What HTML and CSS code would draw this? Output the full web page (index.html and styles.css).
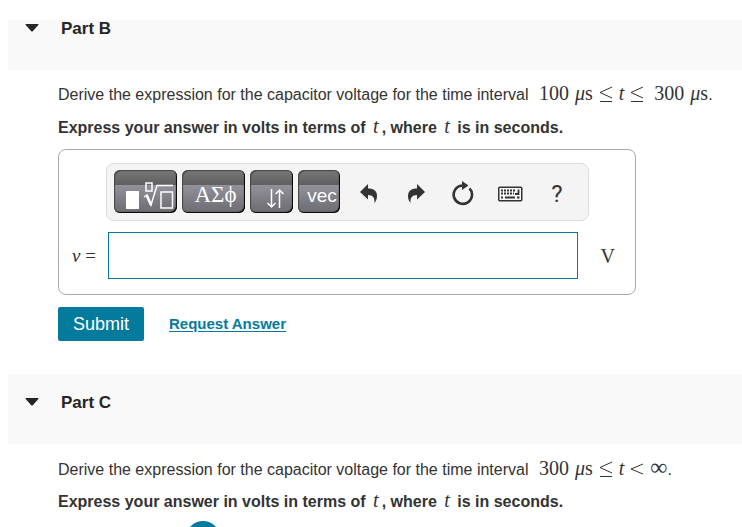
FILE: index.html
```html
<!DOCTYPE html>
<html lang="en">
<head>
  <meta charset="UTF-8">
  <meta name="viewport" content="width=device-width, initial-scale=1.0">
  <title>Capacitor Voltage</title>
  <link rel="stylesheet" href="styles.css">
</head>
<body>
  <!-- Part B -->
  <section class="part">
    <div class="part-header part-header-first">
      <button type="button" class="toggle" aria-label="Collapse Part B">
        <svg width="14" height="8" viewBox="0 0 14 8"><path d="M1 0H13Q14 0 13.300 1L8 7Q7 8 6 7L.7 1Q0 0 1 0Z" fill="#252525"/></svg>
      </button>
      <h2>Part B</h2>
    </div>
    <div class="part-body">
      <p class="question">Derive the expression for the capacitor voltage for the time interval <span class="math"><span>100</span><span><i>μ</i>s</span><svg class="rel" width="14" height="20" viewBox="0 0 14 20"><path d="M13 4L1 9.500L13 15M1 18.500H13"/></svg><i>t</i><svg class="rel" width="14" height="20" viewBox="0 0 14 20"><path d="M13 4L1 9.500L13 15M1 18.500H13"/></svg><span class="after">300</span><span><i>μ</i>s</span></span>.</p>
      <p class="instruction">Express your answer in volts in terms of <i class="var">t</i>, where <i class="var">t</i> is in seconds.</p>

      <form id="answerForm">
        <div class="answer-box">
          <div class="toolbar">
            <button type="button" class="tool" aria-label="Templates">
              <svg width="63" height="43" viewBox="0 0 63 43"><path d="M12 21H25V39H12Z" fill="#fff"/><path d="M32 13H38V21H32ZM47 22H58.500V38H47Z" fill="none" stroke="#fff" stroke-width="1.500"/><path d="M30 27L33 25L37 35L43 15.500H59" fill="none" stroke="#fff" stroke-width="1.500"/><path d="M33 26L37 35" stroke="#fff" stroke-width="2.500"/></svg>
            </button>
            <button type="button" class="tool greek">ΑΣϕ</button>
            <button type="button" class="tool arrows" aria-label="Arrows">
              <svg width="43" height="43" viewBox="0 0 43 43"><path d="M21.500 19V37M17.500 33L21.500 37L25.500 33M29.500 38V20M25.500 24L29.500 20L33.500 24" fill="none" stroke="#fff" stroke-width="1.500"/></svg>
            </button>
            <button type="button" class="tool vec">vec</button>
            <button type="button" class="icon" aria-label="Undo">
              <svg width="20" height="22" viewBox="0 0 20 22"><path d="M1 9L9 1V5.500C15 5.500 18 8 18 13C18 16 17 18 15.500 20C16 15 14 12 9 12V16.500Z" fill="#333"/></svg>
            </button>
            <button type="button" class="icon" aria-label="Redo">
              <svg width="20" height="22" viewBox="0 0 20 22"><path d="M19 9L11 1V5.500C5 5.500 2 8 2 13C2 16 3 18 4.500 20C4 15 6 12 11 12V16.500Z" fill="#333"/></svg>
            </button>
            <button type="button" class="icon" aria-label="Reset">
              <svg width="22" height="28" viewBox="0 0 22 28"><path d="M17.500 8.300A9.200 9.200 0 1 1 10 5.500" fill="none" stroke="#333" stroke-width="2.600"/><path d="M10 1L16.500 5.500L10 10Z" fill="#333"/></svg>
            </button>
            <button type="button" class="icon" aria-label="Keyboard">
              <svg width="26" height="18" viewBox="0 0 26 18"><rect x="1.750" y="2.250" width="23" height="13.500" rx="1" fill="#f8f8f8" stroke="#333" stroke-width="1.500"/><path d="M4 5.500H19M4 8.500H17" stroke="#333" stroke-width="2" stroke-dasharray="2 1"/><path d="M21.500 4.500V9H18M4 12.500H6M8 12.500H18M20 12.500H22.500" fill="none" stroke="#333" stroke-width="1.800"/></svg>
            </button>
            <button type="button" class="icon help" aria-label="Help">?</button>
          </div>
          <div class="answer-row">
            <label for="answer"><i>v</i> =</label>
            <input type="text" id="answer">
            <span class="volts">V</span>
          </div>
        </div>
        <div class="actions">
          <button type="submit" class="submit">Submit</button>
          <a href="#request">Request Answer</a>
        </div>
      </form>
    </div>
  </section>

  <!-- Part C -->
  <section class="part">
    <div class="part-header">
      <button type="button" class="toggle" aria-label="Collapse Part C">
        <svg width="14" height="8" viewBox="0 0 14 8"><path d="M1 0H13Q14 0 13.300 1L8 7Q7 8 6 7L.7 1Q0 0 1 0Z" fill="#252525"/></svg>
      </button>
      <h2>Part C</h2>
    </div>
    <div class="part-body">
      <p class="question">Derive the expression for the capacitor voltage for the time interval <span class="math"><span>300</span><span><i>μ</i>s</span><svg class="rel" width="14" height="20" viewBox="0 0 14 20"><path d="M13 4L1 9.500L13 15M1 18.500H13"/></svg><i>t</i><svg class="rel" width="14" height="20" viewBox="0 0 14 20"><path d="M13 6L1 11L13 16"/></svg><span class="inf">∞</span></span>.</p>
      <p class="instruction">Express your answer in volts in terms of <i class="var">t</i>, where <i class="var">t</i> is in seconds.</p>
      <div class="marker"></div>
    </div>
  </section>
</body>
</html>
```

FILE: styles.css
```css
body {
  font-family: "Liberation Sans", Arial, sans-serif;
  font-size: 16px;
  line-height: 20px;
  margin: 0;
  padding: 20px 0 0 8px;
  height: 100vh;
  box-sizing: border-box;
  overflow: hidden;
  background-color: #fff;
  color: #333;
}
button {
  font-family: inherit;
  padding: 0;
  border: none;
  cursor: pointer;
}
.part-header {
  display: flex;
  align-items: flex-start;
  gap: 22px;
  height: 70px;
  padding: 20px 0 0 17px;
  box-sizing: border-box;
  background-color: #f9f9f9;
}
.part-header-first {
  height: 50px;
  padding-top: 0;
}
.part-header h2 {
  margin: 0;
  font-size: 17px;
  line-height: 18px;
  color: #252525;
}
.toggle {
  display: flex;
  align-items: center;
  height: 16px;
  background: none;
}
.part-body {
  padding: 13px 0 0 50px;
}
p {
  height: 20px;
  margin: 0 0 13px;
  white-space: nowrap;
}
.instruction {
  font-weight: bold;
}
.math {
  display: inline-flex;
  align-items: baseline;
  gap: 6px;
  margin-left: 6px;
  font-family: "Liberation Serif", "Times New Roman", serif;
  font-size: 20px;
  line-height: 20px;
}
.math .rel {
  align-self: center;
  fill: none;
  stroke: #333;
  stroke-width: 1;
}
.math .after {
  margin-left: 4px;
}
.math .inf {
  font-size: 24px;
}
.var {
  padding: 0 3px;
  font-family: "Liberation Serif", "Times New Roman", serif;
  font-size: 20px;
  font-weight: normal;
  line-height: 20px;
}
.answer-box {
  max-width: 578px;
  box-sizing: border-box;
  padding: 13px 46px 15px 13px;
  border: 1px solid #aaa;
  border-radius: 8px;
}
.toolbar {
  display: flex;
  align-items: center;
  gap: 5px;
  height: 58px;
  margin-left: 34px;
  padding: 0 7px;
  box-sizing: border-box;
  border: 1px solid #ddd;
  border-radius: 8px;
  background-color: #f4f4f4;
}
.tool {
  display: flex;
  justify-content: center;
  width: 63px;
  height: 43px;
  margin-bottom: 2px;
  overflow: hidden;
  border-radius: 6px;
  box-shadow: inset -1px -1px 1px #000, inset 1px 1px 1px #444;
  background: linear-gradient(#777, #606060 15px, #93919b 15px, #6c6b6f);
  color: #fff;
}
.greek {
  font-family: "Liberation Serif", "Times New Roman", serif;
  font-size: 23px;
  line-height: 50px;
  padding-left: 4px;
}
.arrows {
  width: 43px;
}
.vec {
  width: 42px;
  font-size: 19px;
  line-height: 52px;
  padding-left: 6px;
}
.icon {
  display: flex;
  justify-content: center;
  align-items: center;
  width: 42px;
  margin-top: 4px;
  background: none;
  color: #333;
}
.vec + .icon {
  margin-left: 3px;
}
.help {
  font-family: Roboto, sans-serif;
  font-size: 24px;
  line-height: 30px;
}
.answer-row {
  display: flex;
  align-items: center;
  margin: 11px -26px 0 0;
}
.answer-row label {
  width: 36px;
  font-family: "Liberation Serif", "Times New Roman", serif;
  font-size: 19px;
  white-space: nowrap;
}
.answer-row input {
  flex: 1;
  min-width: 0;
  height: 47px;
  box-sizing: border-box;
  border: 1px solid #047a9c;
  background-color: #fff;
  font-size: 18px;
}
.volts {
  width: 37px;
  text-align: right;
  font-family: "Liberation Serif", "Times New Roman", serif;
  font-size: 20px;
}
.actions {
  display: flex;
  align-items: center;
  gap: 25px;
  padding: 12px 0 33px;
}
.submit {
  width: 86px;
  height: 34px;
  border-radius: 2px;
  background-color: #047a9c;
  color: #fff;
  font-size: 18px;
}
.actions a {
  font-size: 15px;
  font-weight: bold;
  color: #047a9c;
  text-underline-offset: 2px;
}
.marker {
  width: 34px;
  height: 34px;
  margin: -2px 0 0 128px;
  border-radius: 50%;
  background-color: #047a9c;
}
```
